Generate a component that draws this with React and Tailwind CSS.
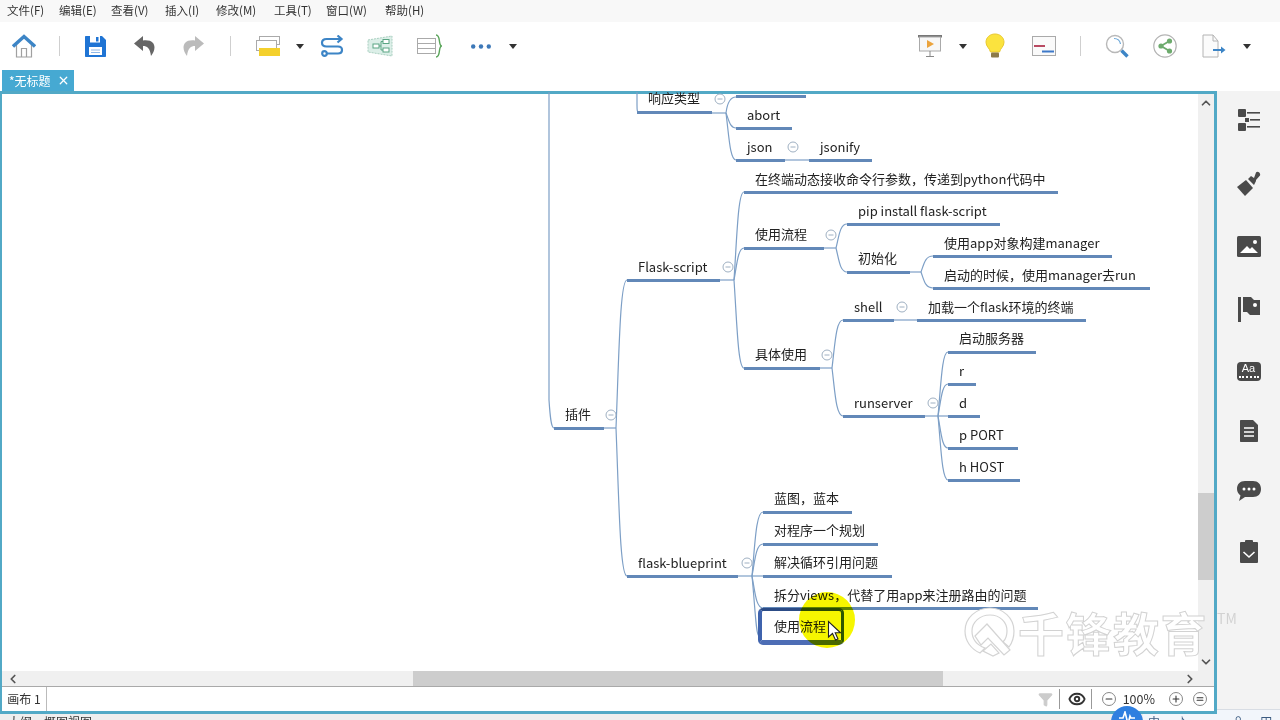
import { Eye, Plus, Minus, Equal, X, ChevronUp, ChevronDown, ChevronLeft, ChevronRight, Filter } from "lucide-react";

const menus = [
  { t: "文件(F)", w: 52 },
  { t: "编辑(E)", w: 52 },
  { t: "查看(V)", w: 54 },
  { t: "插入(I)", w: 51 },
  { t: "修改(M)", w: 58 },
  { t: "工具(T)", w: 52 },
  { t: "窗口(W)", w: 59 },
  { t: "帮助(H)", w: 52 },
];

// x, center y, text, underline start, underline end
const nodes = [
  { x: 648, y: 99, t: "响应类型", a: 637, b: 712 },
  { x: 747, y: 115, t: "abort", a: 736, b: 792 },
  { x: 747, y: 147, t: "json", a: 736, b: 785 },
  { x: 820, y: 147, t: "jsonify", a: 809, b: 872 },
  { x: 755, y: 179, t: "在终端动态接收命令行参数，传递到python代码中", a: 744, b: 1058 },
  { x: 755, y: 235, t: "使用流程", a: 744, b: 824 },
  { x: 858, y: 211, t: "pip install flask-script", a: 847, b: 1000 },
  { x: 858, y: 259, t: "初始化", a: 847, b: 910 },
  { x: 944, y: 243, t: "使用app对象构建manager", a: 933, b: 1112 },
  { x: 944, y: 275, t: "启动的时候，使用manager去run", a: 933, b: 1150 },
  { x: 638, y: 267, t: "Flask-script", a: 627, b: 720 },
  { x: 755, y: 355, t: "具体使用", a: 744, b: 820 },
  { x: 854, y: 307, t: "shell", a: 843, b: 894 },
  { x: 928, y: 307, t: "加载一个flask环境的终端", a: 917, b: 1086 },
  { x: 854, y: 403, t: "runserver", a: 843, b: 925 },
  { x: 959, y: 339, t: "启动服务器", a: 948, b: 1036 },
  { x: 959, y: 371, t: "r", a: 948, b: 976 },
  { x: 959, y: 403, t: "d", a: 948, b: 980 },
  { x: 959, y: 435, t: "p PORT", a: 948, b: 1018 },
  { x: 959, y: 467, t: "h HOST", a: 948, b: 1020 },
  { x: 565, y: 415, t: "插件", a: 554, b: 604 },
  { x: 638, y: 563, t: "flask-blueprint", a: 627, b: 738 },
  { x: 774, y: 499, t: "蓝图，蓝本", a: 763, b: 852 },
  { x: 774, y: 531, t: "对程序一个规划", a: 763, b: 878 },
  { x: 774, y: 563, t: "解决循环引用问题", a: 763, b: 892 },
  { x: 774, y: 595, t: "拆分views，代替了用app来注册路由的问题", a: 763, b: 1038 },
  { x: 774, y: 627, t: "使用流程", a: 763, b: 842, noLine: true },
];

const toggles = [
  [720, 99], [793, 147], [728, 267], [831, 235], [827, 355], [902, 307], [933, 403], [611, 415], [747, 563],
];

// parent junction -> child underline start
const curve = (x1, y1, x2, y2) => `M${x1} ${y1} C${x1 + 3} ${(y1 + y2) / 2} ${x1 + 4} ${y2} ${x2} ${y2}`;

const links = [
  curve(726, 113, 736, 128), curve(726, 113, 736, 160), "M726 113 C727 105 730 97 736 97",
  "M712 113 L726 113", "M785 160 L809 160",
  curve(734, 280, 744, 192), curve(734, 280, 744, 248), curve(734, 280, 744, 368), "M720 280 L734 280",
  curve(836, 248, 847, 224), curve(836, 248, 847, 272), "M824 248 L836 248",
  curve(921, 272, 933, 256), curve(921, 272, 933, 288), "M910 272 L921 272",
  curve(832, 368, 843, 320), curve(832, 368, 843, 416), "M820 368 L832 368", "M894 320 L917 320",
  curve(938, 416, 948, 352), curve(938, 416, 948, 384), "M925 416 L948 416", curve(938, 416, 948, 448), curve(938, 416, 948, 480),
  curve(616, 428, 627, 280), curve(616, 428, 627, 576), "M604 428 L616 428",
  curve(752, 576, 763, 512), curve(752, 576, 763, 544), "M738 576 L763 576", curve(752, 576, 763, 608), curve(752, 576, 759, 636),
  "M549 92 L549 400 C550 415 551 428 554 428", "M637 92 L637 105 C637 110 637 113 640 113",
];

function MindMap() {
  return (
    <div className="absolute left-0 top-0 h-[720px] w-[1280px] pointer-events-none">
      <svg className="absolute left-0 top-0" width="1280" height="720" fill="none">
        <g stroke="#7d9fc6" strokeWidth="1.2">
          {links.map((d, i) => <path key={i} d={d} />)}
        </g>
        <g stroke="#6288b8" strokeWidth="3">
          {nodes.filter((n) => !n.noLine).map((n, i) => <path key={i} d={`M${n.a} ${n.y + 13.5}H${n.b}`} />)}
          <path d="M736 96.5H806" />
        </g>
        {toggles.map(([x, y], i) => (
          <g key={i} stroke="#9fb0c2" strokeWidth="1" fill="#fff">
            <circle cx={x} cy={y} r="5" />
            <path d={`M${x - 2.5} ${y}H${x + 2.5}`} />
          </g>
        ))}
      </svg>
      {nodes.map((n) => (
        <div
          key={n.x + n.t}
          className="absolute whitespace-nowrap text-[13px] leading-[18px] text-[#222]"
          style={{ left: n.x, top: n.y - 9 - (/[a-zA-Z]/.test(n.t) ? 0 : 1) }}
        >
          {n.t}
        </div>
      ))}
    </div>
  );
}

function Highlight() {
  return (
    <>
      <div className="absolute left-[758px] top-[608px] h-[37px] w-[86px] rounded-[5px] border-b-[5px] border-l-[4px] border-r-[3px] border-t-[3px] border-b-[#4d6db5] border-l-[#3f63ad] border-r-[#2f5a6c] border-t-[#2c4c86]" />
      <div className="absolute left-[799px] top-[592px] h-[56px] w-[56px] rounded-full bg-[#f6f600] mix-blend-multiply" />
      <svg className="absolute left-[827px] top-[620px]" width="15" height="22" viewBox="0 0 15 22">
        <path d="M1.5 1.5V17L5.5 13.5L8.5 20L11 19L8.2 12.8H13.5Z" fill="#fff" stroke="#222" strokeWidth="1.1" />
      </svg>
    </>
  );
}

function Watermark() {
  return (
    <div className="absolute left-[963px] top-[603px] flex items-center pointer-events-none">
      <svg width="52" height="56" viewBox="0 0 52 56" fill="#fff" stroke="#d4d4d4" strokeWidth="1.2">
        <path d="M27 5C13 5 2 15 2 28C2 38 8 46 17 50L22 45C14 42 9 36 9 28C9 19 17 12 27 12C37 12 44 19 44 28C44 32 43 36 40 39L46 44C49 40 51 34 51 28C51 15 40 5 27 5Z" />
        <path d="M12 33L24 21L47 47L41 52L25 35L18 42Z" />
        <path d="M20 48L28 41L36 50L30 53Z" />
      </svg>
      <span className="ml-[3px] text-[46px] leading-[56px] font-bold tracking-[1.5px] text-white [-webkit-text-stroke:1px_#d2d2d2]">千锋教育</span>
      <span className="-mt-[26px] ml-[9px] text-[14px] text-[#d2d2d2]">TM</span>
    </div>
  );
}

function Arrow({ className }) {
  return <svg className={className} width="8" height="5"><path d="M0 0H8L4 5Z" fill="#333" /></svg>;
}

function TopIcons() {
  return (
    <div className="flex h-[48px] items-center bg-white">
      <svg className="ml-[12px]" width="24" height="24" viewBox="0 0 24 24" fill="none">
        <path d="M4.5 11V23H19.5V11" fill="#fff" stroke="#a0a0a0" strokeWidth="1.2" />
        <path d="M9.5 23V14.5H14.5V23" stroke="#a0a0a0" strokeWidth="1.2" />
        <path d="M1 12.5L12 2.5L23 12.5" stroke="#3d85c6" strokeWidth="3.4" />
      </svg>
      <div className="ml-[23px] h-[20px] w-px bg-[#cfcfcf]" />
      <svg className="ml-[25px]" width="21" height="21" viewBox="0 0 21 21">
        <path d="M0 1C0 .4.4 0 1 0H17L21 4V20C21 20.6 20.6 21 20 21H1C.4 21 0 20.6 0 20Z" fill="#1f74d4" />
        <rect x="5" y="0" width="10" height="6.5" fill="#fff" />
        <rect x="11" y="1" width="2.5" height="4.5" fill="#1f74d4" />
        <rect x="4" y="11" width="13" height="8" fill="#fff" />
        <path d="M6 14H15M6 16.5H15" stroke="#8fb8e8" />
      </svg>
      <svg className="ml-[28px]" width="21" height="22" viewBox="0 0 21 22">
        <path d="M9 1L0 8.5L9 16V11C13 11 16 13 17 21C20 17 22 12 19 8C17 5.5 13 5 9 5.5Z" fill="#666" />
      </svg>
      <svg className="ml-[28px]" width="21" height="22" viewBox="0 0 21 22">
        <path d="M12 1L21 8.5L12 16V11C8 11 5 13 4 21C1 17 -1 12 2 8C4 5.5 8 5 12 5.5Z" fill="#bbb" />
      </svg>
      <div className="ml-[26px] h-[20px] w-px bg-[#cfcfcf]" />
      <svg className="ml-[25px]" width="24" height="22" viewBox="0 0 24 22" fill="none">
        <rect x="3.5" y="1.5" width="20" height="8" fill="#fff" stroke="#aaa" />
        <rect x="0.5" y="5.5" width="20" height="10" fill="#fff" stroke="#aaa" />
        <rect x="3" y="13" width="21" height="8" fill="#f4d02c" />
      </svg>
      <Arrow className="ml-[16px]" />
      <svg className="ml-[16px]" width="24" height="22" viewBox="0 0 24 22" fill="none" stroke="#3d85c6" strokeWidth="2.2">
        <path d="M21 4H6.5C3.5 4 2 5.6 2 7.8C2 10 3.5 11.5 6.5 11.5H18C20.6 11.5 22 13 22 15C22 17 20.6 18.5 18 18.5H7" />
        <path d="M17.5 0.5L21.5 4L17.5 7.5" />
        <circle cx="4.5" cy="18.5" r="2.3" />
      </svg>
      <svg className="ml-[23px]" width="26" height="22" viewBox="0 0 26 22" fill="none">
        <path d="M1 5L25 1V21L1 17Z" fill="#dcefe8" stroke="#a9cfc0" strokeDasharray="2 1" />
        <rect x="6" y="9" width="6" height="4" fill="#fff" stroke="#5aa583" />
        <rect x="16" y="4.5" width="6" height="4" fill="#fff" stroke="#5aa583" />
        <rect x="16" y="13" width="6" height="4" fill="#fff" stroke="#5aa583" />
        <path d="M12 11H14V6.5H16M14 11V15H16" stroke="#5aa583" />
      </svg>
      <svg className="ml-[24px]" width="25" height="24" viewBox="0 0 25 24" fill="none">
        <rect x="0.5" y="4.5" width="18" height="5" stroke="#aaa" />
        <rect x="0.5" y="9.5" width="18" height="5" stroke="#aaa" />
        <rect x="0.5" y="14.5" width="18" height="5" stroke="#aaa" />
        <path d="M19 1C24 1 21 11 24.5 12C21 13 24 23 19 23" stroke="#5aa55a" strokeWidth="1.4" />
      </svg>
      <svg className="ml-[29px]" width="20" height="5" viewBox="0 0 20 5" fill="#3d78b8">
        <circle cx="2.2" cy="2.5" r="2.2" /><circle cx="10" cy="2.5" r="2.2" /><circle cx="17.8" cy="2.5" r="2.2" />
      </svg>
      <Arrow className="ml-[18px]" />

      <div className="flex-1" />

      <svg width="24" height="24" viewBox="0 0 24 24" fill="none">
        <rect x="0" y="1" width="24" height="2.5" fill="#777" />
        <rect x="1.5" y="3" width="21" height="14" fill="#f7f7f7" stroke="#aaa" />
        <path d="M9 6V14L16 10Z" fill="#eba33c" />
        <path d="M12 17V22M8 22.5H16" stroke="#888" />
      </svg>
      <Arrow className="ml-[17px]" />
      <svg className="ml-[18px]" width="20" height="26" viewBox="0 0 20 26">
        <path d="M10 1C4.5 1 1 4.8 1 9.3C1 13.5 4.5 15 5.5 19H14.5C15.5 15 19 13.5 19 9.3C19 4.8 15.5 1 10 1Z" fill="#fbe33e" stroke="#e9c92e" />
        <rect x="6" y="19.5" width="8" height="5" rx="1" fill="#8d7b4a" />
      </svg>
      <svg className="ml-[27px]" width="24" height="20" viewBox="0 0 24 20" fill="none">
        <rect x="0.5" y="0.5" width="23" height="19" fill="#fafafa" stroke="#aaa" />
        <path d="M2 10H13" stroke="#b94a62" strokeWidth="2" />
        <path d="M10 15.5H22" stroke="#3d78c8" strokeWidth="2" />
      </svg>
      <div className="ml-[24px] h-[20px] w-px bg-[#cfcfcf]" />
      <svg className="ml-[24px]" width="24" height="24" viewBox="0 0 24 24" fill="none">
        <circle cx="10" cy="10" r="8.5" fill="#fff" stroke="#b8b8b8" strokeWidth="1.4" />
        <path d="M9 4.5C12.5 4.5 15 7 15.5 10" stroke="#6aa6d8" strokeWidth="1.2" />
        <path d="M16.5 16.5L22.5 22.5" stroke="#3d85c6" strokeWidth="3.4" />
      </svg>
      <svg className="ml-[24px]" width="24" height="24" viewBox="0 0 24 24" fill="none">
        <circle cx="12" cy="12" r="11.2" fill="#fff" stroke="#b4b4b4" strokeWidth="1.2" />
        <path d="M16.5 7L8 12L16.5 17" stroke="#6dab6d" strokeWidth="1.8" />
        <circle cx="16.5" cy="7" r="2.6" fill="#6dab6d" /><circle cx="8" cy="12" r="2.6" fill="#6dab6d" /><circle cx="16.5" cy="17" r="2.6" fill="#6dab6d" />
      </svg>
      <svg className="ml-[25px]" width="24" height="24" viewBox="0 0 24 24" fill="none">
        <path d="M1 1H11L16 7V23H1Z" fill="#fbfbfb" stroke="#b4b4b4" />
        <path d="M11 1V7H16" stroke="#b4b4b4" />
        <path d="M11 16H22" stroke="#3d85c6" strokeWidth="2" />
        <path d="M19 12.5L23.5 16L19 19.5Z" fill="#3d85c6" />
      </svg>
      <Arrow className="ml-[17px] mr-[29px]" />
    </div>
  );
}

function SideIcons() {
  return (
    <div className="flex w-[63px] flex-col items-center bg-[#f3f3f3] pt-[17px]">
      <div className="flex h-[455px] flex-col items-center justify-between">
        <svg width="24" height="24" viewBox="0 0 24 24" fill="#4a4a4a">
          <rect x="1" y="1" width="8" height="8" rx="1" /><rect x="1" y="15" width="8" height="8" rx="1" /><rect x="8" y="10" width="4" height="4" />
          <rect x="10" y="4" width="13" height="1.6" /><rect x="13" y="11" width="10" height="1.6" /><rect x="10" y="18" width="13" height="1.6" />
        </svg>
        <svg width="25" height="26" viewBox="0 0 25 26" fill="#4a4a4a">
          <path d="M1 16L10 9L17 17L9 25Z" />
          <path d="M12 8L15 5L18 7L20 1.5C21.5 -.5 25 2 24 4.5L20 9L20 10L18 14Z" />
        </svg>
        <svg width="24" height="21" viewBox="0 0 24 21">
          <rect width="24" height="21" rx="1.5" fill="#4a4a4a" />
          <path d="M3 17L10 10L13 13L15 11L21 17Z" fill="#fff" /><circle cx="18" cy="6" r="2" fill="#fff" />
        </svg>
        <svg width="22" height="26" viewBox="0 0 22 26" fill="#4a4a4a">
          <rect x="0" y="1" width="3" height="25" />
          <path d="M5 1H13L16 4H22V19H12L9 16H5Z" /><circle cx="17" cy="9" r="2" fill="#fff" />
        </svg>
        <div className="flex h-[19px] w-[24px] flex-col items-center rounded-sm bg-[#4a4a4a] text-[11px] leading-[13px] text-white [font-family:'Liberation_Sans',sans-serif]">
          Aa
          <div className="mt-[1px] w-[20px] border-t-2 border-dotted border-white" />
        </div>
        <svg width="18" height="22" viewBox="0 0 18 22" fill="#4a4a4a">
          <path d="M1 0H13L18 5V21C18 21.6 17.6 22 17 22H1C.4 22 0 21.6 0 21V1C0 .4.4 0 1 0Z" />
          <path d="M4 8H14M4 12H14M4 16H14" stroke="#fff" strokeWidth="1.4" />
        </svg>
        <svg width="24" height="20" viewBox="0 0 24 20">
          <path d="M8 0H16C21 0 24 3 24 8C24 13 21 16 16 16H8L2 20L3.5 14.5C1.5 13 0 11 0 8C0 3 3 0 8 0Z" fill="#4a4a4a" />
          <circle cx="7" cy="8" r="1.5" fill="#fff" /><circle cx="12" cy="8" r="1.5" fill="#fff" /><circle cx="17" cy="8" r="1.5" fill="#fff" />
        </svg>
        <svg width="18" height="23" viewBox="0 0 18 23" fill="#4a4a4a">
          <rect x="0" y="2" width="18" height="21" rx="1" /><rect x="5" y="0" width="8" height="4" rx="1" />
          <path d="M3.5 12L9 17L14.5 12" fill="none" stroke="#fff" strokeWidth="1.6" />
        </svg>
      </div>
    </div>
  );
}

export default function App() {
  return (
    <div className="relative flex h-[720px] w-[1280px] flex-col overflow-hidden bg-[#f0f0f0] [font-family:'Noto_Sans_CJK_SC','Noto_Sans',sans-serif]">
      <div className="flex h-[22px] items-center bg-[#f8f8f8] pl-[7px] text-[11.5px] text-[#333]">
        {menus.map((m) => <span key={m.t} className="whitespace-nowrap" style={{ width: m.w }}>{m.t}</span>)}
      </div>
      <TopIcons />
      <div className="flex h-[21px] bg-white pl-[2px]">
        <div className="flex w-[72px] items-center bg-[#46a9d2] pl-[7px] text-[12px] text-white">
          <span className="whitespace-nowrap">*无标题</span>
          <X className="ml-[6px]" size={13} strokeWidth={2.4} />
        </div>
      </div>
      <div className="flex flex-1 min-h-0">
        <div className="flex h-[623px] w-[1217px] flex-col border-[3px] border-[#52a9c6] border-l-[2px] bg-white">
          <div className="flex flex-1 min-h-0">
            <div className="flex-1" />
            <div className="flex w-[16px] flex-col items-center bg-[#f0f0f0] text-[#555]">
              <ChevronUp size={14} strokeWidth={3} className="mt-[2px]" />
              <div className="mt-[383px] h-[87px] w-full bg-[#cdcdcd]" />
              <div className="flex-1" />
              <ChevronDown size={14} strokeWidth={3} className="mb-[2px]" />
            </div>
          </div>
          <div className="flex h-[15px] items-center bg-[#f0f0f0] text-[#555]">
            <ChevronLeft size={14} strokeWidth={3} className="ml-[4px]" />
            <div className="ml-[393px] h-full w-[530px] bg-[#cdcdcd]" />
            <div className="flex-1" />
            <ChevronRight size={14} strokeWidth={3} className="mr-[17px]" />
          </div>
          <div className="flex h-[25px] items-center border-t border-[#a9a9a9] bg-white text-[12px] text-[#333]">
            <div className="flex h-full w-[45px] items-center justify-center whitespace-nowrap border-r border-[#bbb]">画布 1</div>
            <div className="flex-1" />
            <Filter size={15} className="text-[#ccc]" fill="#ccc" />
            <div className="ml-[6px] h-[20px] w-px bg-[#999]" />
            <Eye size={18} className="ml-[8px] text-[#333]" strokeWidth={2.6} />
            <div className="ml-[5px] h-[20px] w-px bg-[#999]" />
            <div className="ml-[10px] flex h-[14px] w-[14px] items-center justify-center rounded-full border border-[#888]"><Minus size={10} strokeWidth={2.6} /></div>
            <span className="ml-[7px] text-[12.5px]">100%</span>
            <div className="ml-[14px] flex h-[14px] w-[14px] items-center justify-center rounded-full border border-[#888]"><Plus size={10} strokeWidth={2.6} /></div>
            <div className="ml-[10px] mr-[7px] flex h-[14px] w-[14px] items-center justify-center rounded-full border border-[#888]"><Equal size={10} strokeWidth={2.6} /></div>
          </div>
        </div>
        <SideIcons />
      </div>
      <MindMap />
      <Highlight />
      <Watermark />
      <div className="absolute bottom-0 left-0 flex h-[6px] w-[1217px] gap-[12px] overflow-hidden bg-[#eeeeee] pl-[8px] text-[12px] leading-[16px] text-[#333]">
        <span>大纲</span>
        <span>概图视图</span>
      </div>
      <div className="absolute bottom-0 left-[1143px] flex h-[6px] w-[74px] bg-[#f2f6fb]" />
      <div className="absolute bottom-0 left-[1217px] flex h-[11px] w-[63px] border-t border-[#d8dde4] bg-[#f2f6fb]" />
      <div className="absolute bottom-0 left-[1148px] flex h-[5px] w-[130px] items-start gap-[16px] overflow-hidden text-[12px] leading-[14px] text-[#3a5a80]">
        <span>中</span>
        <span>♪</span>
        <span>☺</span>
        <span>♀</span>
        <span>田</span>
      </div>
      <div className="absolute left-[1111px] top-[706px] flex h-[32px] w-[32px] items-start justify-center rounded-full bg-[#2f7fe0] pt-[5px]">
        <svg width="18" height="14" viewBox="0 0 18 14" fill="none" stroke="#fff" strokeWidth="1.6"><path d="M1 7H5L7 1L10 13L12 5L13 7H17" /></svg>
      </div>
    </div>
  );
}
